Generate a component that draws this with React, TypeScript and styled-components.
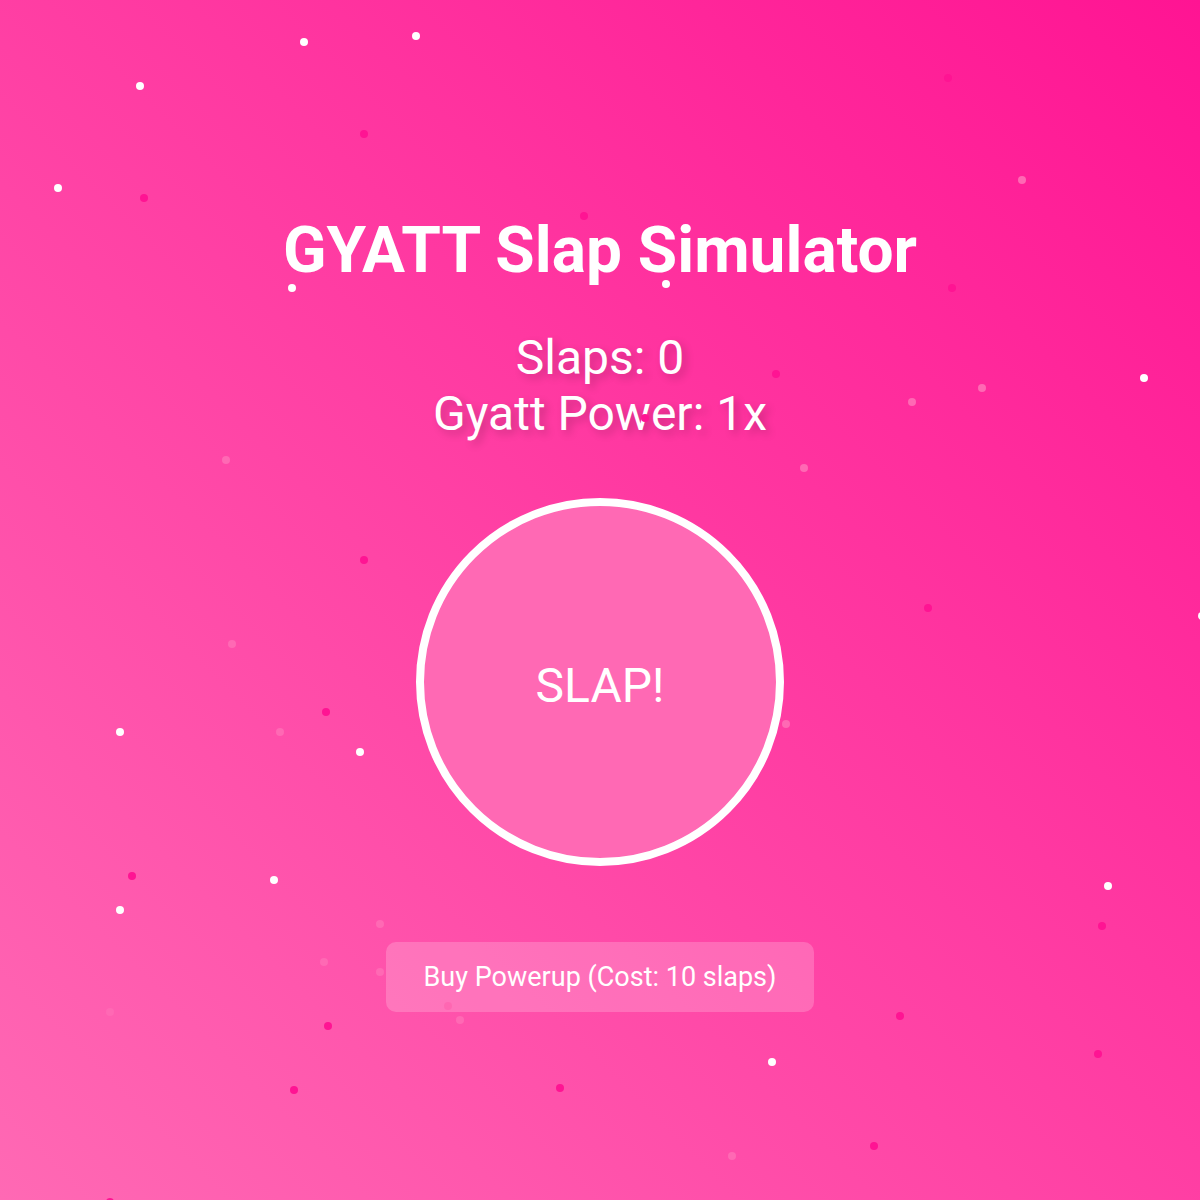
import React, { useState } from "react";
import styled, { createGlobalStyle } from "styled-components";

const GlobalStyle = createGlobalStyle`
  body {
    margin: 0;
    font-family: Roboto, "Liberation Sans", sans-serif;
    color: #ffffff;
  }
`;

const Game = styled.main`
  position: relative;
  display: flex;
  flex-direction: column;
  align-items: center;
  justify-content: center;
  min-height: 100vh;
  box-sizing: border-box;
  overflow: hidden;
  background: linear-gradient(45deg, #ff69b4, #ff1493);
  text-align: center;
`;

const Title = styled.h1`
  margin: 46px 0 42px;
  font-size: 64px;
  line-height: 74px;
  font-weight: 700;
`;

const Stats = styled.div`
  margin-bottom: 56px;
  font-size: 48px;
  line-height: 56px;
  text-shadow: 4px 4px 8px rgba(0, 0, 0, 0.2);
`;

const Button = styled.button`
  position: relative;
  border: none;
  color: #ffffff;
  font-family: inherit;
  cursor: pointer;
`;

const SlapButton = styled(Button)`
  width: 368px;
  height: 368px;
  padding: 6px 0 0;
  border: 8px solid #ffffff;
  border-radius: 50%;
  background: #ff69b4;
  font-size: 48px;
`;

const PowerupButton = styled(Button)`
  margin: 76px 0 20px;
  padding: 20px 38px;
  border-radius: 10px;
  background: rgba(255, 255, 255, 0.2);
  font-size: 27px;
  line-height: 30px;
`;

const Particles = styled.div`
  position: absolute;
  inset: 0;
  overflow: hidden;
  pointer-events: none;
`;

const Particle = styled.span<{ $color: string }>`
  position: absolute;
  width: 8px;
  height: 8px;
  margin: -4px 0 0 -4px;
  border-radius: 50%;
  background: ${(p) => p.$color};
`;

const groups: { color: string; points: [number, number][] }[] = [
  {
    color: "#ffffff",
    points: [
      [304, 42], [416, 36], [140, 86], [58, 188], [292, 288], [666, 284],
      [1144, 378], [1202, 616], [120, 732], [360, 752], [274, 880],
      [120, 910], [1108, 886], [772, 1062],
    ],
  },
  {
    color: "#ff1493",
    points: [
      [364, 134], [144, 198], [584, 216], [948, 78], [952, 288], [776, 374],
      [645, 418], [364, 560], [928, 608], [326, 712], [132, 876], [328, 1026],
      [294, 1090], [560, 1088], [900, 1016], [1102, 926], [1098, 1054],
      [874, 1146], [110, 1202],
    ],
  },
  {
    color: "#ff429f",
    points: [[448, 1006]],
  },
  {
    color: "#ff69b4",
    points: [
      [1022, 180], [982, 388], [912, 402], [804, 468], [226, 460],
      [232, 644], [280, 732], [786, 724], [380, 924], [324, 962],
      [380, 972], [110, 1012], [460, 1020], [732, 1156],
    ],
  },
];

export default function App() {
  const [slaps, setSlaps] = useState(0);
  const [power, setPower] = useState(1);
  const [cost, setCost] = useState(10);

  const buyPowerup = () => {
    if (slaps < cost) return;
    setSlaps(slaps - cost);
    setPower(power + 1);
    setCost(cost * 2);
  };

  return (
    <>
      <GlobalStyle />
      <Game>
        <Particles aria-hidden="true">
          {groups.map(({ color, points }) =>
            points.map(([x, y]) => (
              <Particle
                key={`${x}-${y}`}
                $color={color}
                style={{ left: `${x / 12}%`, top: `${y / 12}%` }}
              />
            ))
          )}
        </Particles>
        <Title>GYATT Slap Simulator</Title>
        <Stats>
          <div>Slaps: {slaps}</div>
          <div>Gyatt Power: {power}x</div>
        </Stats>
        <SlapButton type="button" onClick={() => setSlaps(slaps + power)}>
          SLAP!
        </SlapButton>
        <PowerupButton type="button" onClick={buyPowerup}>
          Buy Powerup (Cost: {cost} slaps)
        </PowerupButton>
      </Game>
    </>
  );
}
